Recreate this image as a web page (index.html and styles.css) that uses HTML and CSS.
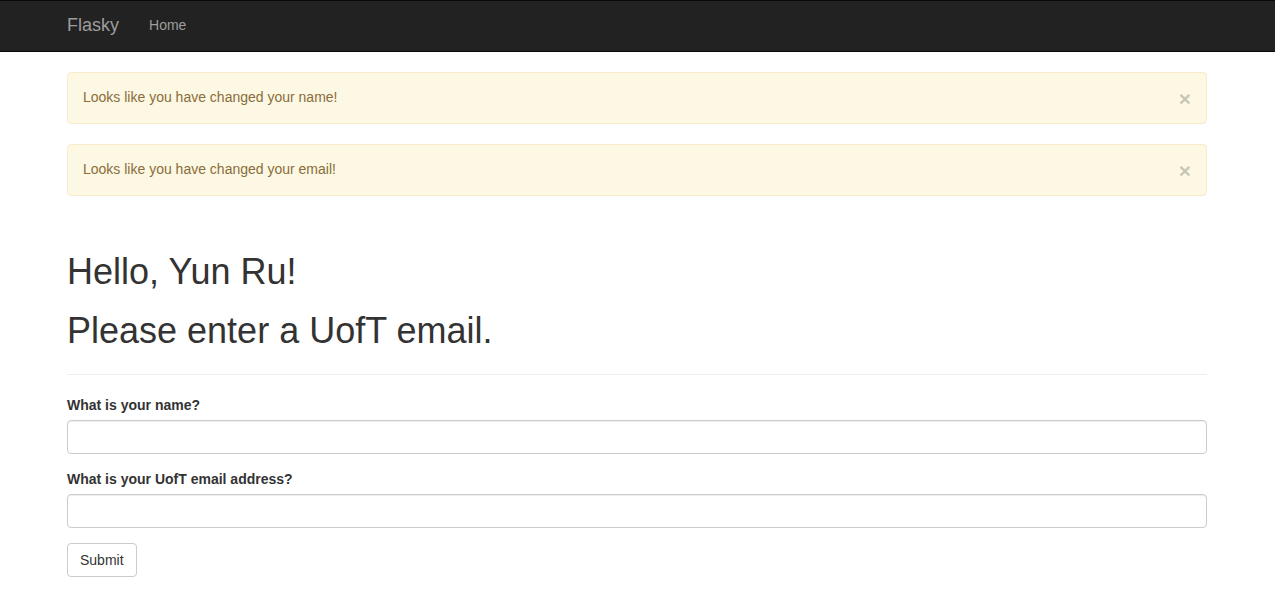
FILE: index.html
```html
<!DOCTYPE html>
<html lang="en">
<head>
<meta charset="utf-8">
<title>Flasky</title>
<link rel="stylesheet" href="styles.css">
</head>
<body>
<nav class="navbar">
  <div class="container nav-inner">
    <a class="brand" href="#">Flasky</a>
    <ul class="nav-links">
      <li><a href="#">Home</a></li>
    </ul>
  </div>
</nav>
<main class="container">
  <div class="alert">
    <button type="button" class="close">&times;</button>
    Looks like you have changed your name!
  </div>
  <div class="alert">
    <button type="button" class="close">&times;</button>
    Looks like you have changed your email!
  </div>
  <div class="page-header">
    <h1 class="greeting">Hello, Yun Ru!</h1>
    <h1 class="prompt">Please enter a UofT email.</h1>
  </div>
  <form class="form">
    <div class="form-group">
      <label for="name">What is your name?</label>
      <input id="name" class="form-control" type="text">
    </div>
    <div class="form-group">
      <label for="email">What is your UofT email address?</label>
      <input id="email" class="form-control" type="text">
    </div>
    <button type="submit" class="btn">Submit</button>
  </form>
</main>
</body>
</html>
```
FILE: styles.css
```css
* { box-sizing: border-box; }
html, body { margin: 0; }
body {
  font-family: "Liberation Sans", Arial, Helvetica, sans-serif;
  font-size: 14px;
  line-height: 1.42857143;
  color: #333;
  background: #fff;
}
.container {
  width: 1171px;
  margin: 0 auto;
  padding: 0 16px 0 15px;
}
.navbar {
  background: #222;
  border-top: 1px solid #080808;
  border-bottom: 1px solid #080808;
  height: 52px;
  margin-bottom: 20px;
}
.nav-inner {
  display: flex;
  align-items: stretch;
}
.brand {
  display: block;
  padding: 14px 15px 16px;
  margin-left: -15px;
  font-size: 18px;
  line-height: 20px;
  color: #9d9d9d;
  text-decoration: none;
}
.nav-links {
  list-style: none;
  margin: 0;
  padding: 0;
  display: flex;
}
.nav-links a {
  display: block;
  padding: 14px 15px 16px;
  line-height: 20px;
  color: #9d9d9d;
  text-decoration: none;
}
.alert {
  padding: 14px 35px 16px 15px;
  margin-bottom: 20px;
  border: 1px solid #faebcc;
  border-radius: 4px;
  background: #fcf8e3;
  color: #8a6d3b;
}
.close {
  float: right;
  position: relative;
  top: 1px;
  right: -20px;
  padding: 0;
  border: 0;
  background: transparent;
  font-family: "Liberation Sans", Arial, sans-serif;
  font-size: 21px;
  font-weight: bold;
  line-height: 1;
  color: #000;
  opacity: .2;
  text-shadow: 0 1px 0 #fff;
  cursor: pointer;
}
.page-header {
  padding-bottom: 24px;
  margin: 56px 0 20px;
  border-bottom: 1px solid #eee;
}
h1 {
  font-size: 36px;
  font-weight: 500;
  line-height: 1.1;
  color: #333;
}
.greeting { margin: 0 0 19px; }
.prompt { margin: 0; }
.form-group { margin-bottom: 15px; }
label {
  display: inline-block;
  margin-bottom: 5px;
  font-weight: bold;
}
.form-control {
  display: block;
  width: 100%;
  height: 34px;
  padding: 6px 12px;
  font: inherit;
  color: #555;
  background: #fff;
  border: 1px solid #ccc;
  border-radius: 4px;
  box-shadow: inset 0 1px 1px rgba(0,0,0,.075);
}
.btn {
  display: inline-block;
  padding: 6px 12px;
  font: inherit;
  line-height: 1.42857143;
  color: #333;
  background: #fff;
  border: 1px solid #ccc;
  border-radius: 4px;
  cursor: pointer;
}
```
